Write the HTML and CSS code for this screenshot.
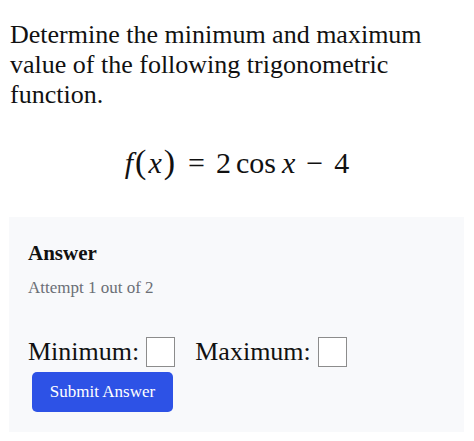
FILE: index.html
```html
<!DOCTYPE html>
<html lang="en">
<head>
  <meta charset="UTF-8" />
  <meta name="viewport" content="width=device-width, initial-scale=1.0"/>
  <title>Trig Question</title>
  <link rel="stylesheet" href="styles.css">
</head>
<body>

  <div class="question">
    <p class="prompt">Determine the minimum and maximum value of the following trigonometric function.</p>
    <div class="math">
      <span class="mi">f</span><span class="paren">(</span><span class="mi">x</span><span class="paren">)</span>
      <span class="op">=</span>
      <span>2</span><span class="fn">cos</span><span class="mi">x</span>
      <span class="op">&minus;</span>
      <span>4</span>
    </div>
  </div>

  <div class="answer-box">
    <h3>Answer</h3>
    <p class="attempt">Attempt 1 out of 2</p>
    <div class="fields">
      <label>Minimum: <input type="text" class="box-input"></label>
      <label>Maximum: <input type="text" class="box-input"></label>
    </div>
    <button class="submit">Submit Answer</button>
  </div>

</body>
</html>
```

FILE: styles.css
```css
* {
  box-sizing: border-box;
}

body {
  margin: 0;
  padding: 0 10px;
  background-color: #fff;
  color: #111;
  font-family: 'Liberation Serif', serif;
}

.prompt {
  margin: 0;
  padding-top: 20px;
  font-size: 26px;
  line-height: 30px;
}

.math {
  display: flex;
  justify-content: center;
  align-items: baseline;
  height: 107px;
  padding-top: 33px;
  font-size: 30px;
}

.math .mi {
  font-style: italic;
}

.math .paren {
  padding: 0 2px;
  font-size: 34px;
}

.math .fn {
  margin: 0 6px 0 5px;
}

.math .op {
  margin: 0 11px;
}

.answer-box {
  background-color: #f8f9fb;
  margin: 0 0 0 -1px;
  width: 455px;
  height: 215px;
  padding: 22px 19px;
}

.answer-box h3 {
  margin: 0;
  font-size: 21px;
  line-height: 28px;
}

.attempt {
  margin: 11px 0 0;
  font-size: 17px;
  color: #6b6f76;
}

.fields {
  display: flex;
  gap: 20px;
  margin-top: 39px;
  font-size: 26px;
}

.fields label {
  display: flex;
  align-items: center;
  gap: 7px;
}

.box-input {
  width: 29px;
  height: 30px;
  border: 1px solid #8c8c8c;
  background: #fff;
}

.submit {
  margin: 5px 0 0 4px;
  width: 141px;
  height: 40px;
  border: none;
  border-radius: 5px;
  background-color: #2d52e6;
  color: #fff;
  font-family: 'Liberation Serif', serif;
  font-size: 17px;
  cursor: pointer;
}
```
